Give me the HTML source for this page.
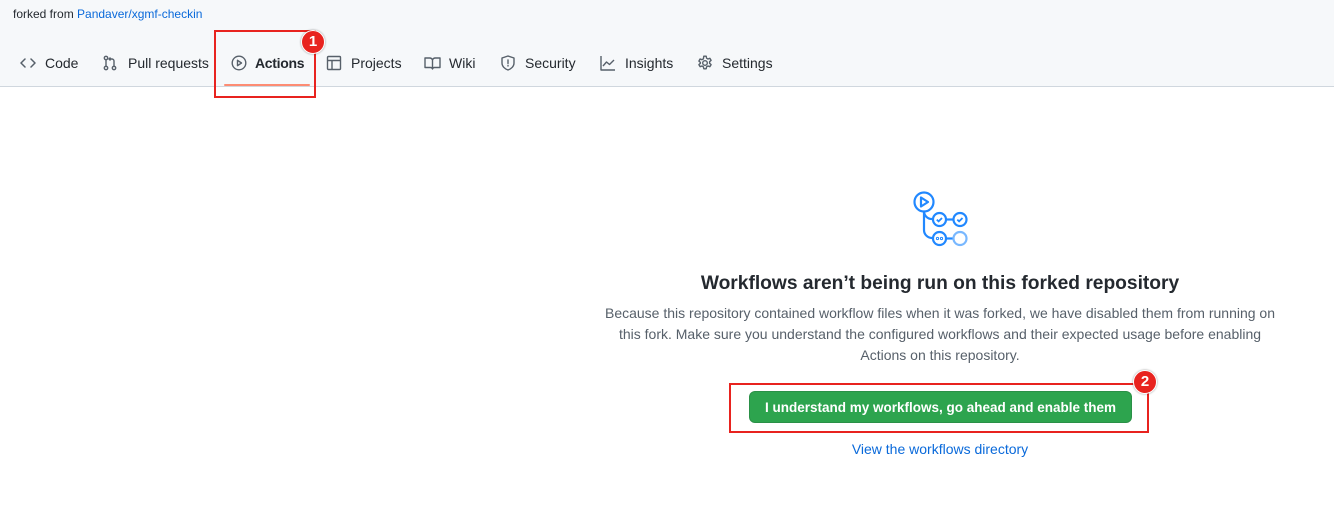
<!DOCTYPE html>
<html><head><meta charset="utf-8"><style>
*{margin:0;padding:0;box-sizing:border-box}
body{width:1334px;height:530px;background:#fff;font-family:"Liberation Sans",sans-serif;color:#24292f;position:relative;overflow:hidden}
.hdr{position:absolute;left:0;top:0;width:1334px;height:87px;background:#f6f8fa;border-bottom:1px solid #d0d7de}
.fork{position:absolute;left:13px;top:7px;font-size:12px;color:#24292f}
.fork a{color:#0969da;text-decoration:none}
.tab{position:absolute;top:54px;font-size:14px;height:18px;line-height:18px;white-space:nowrap}
.tab svg{position:absolute;left:0;top:1px}
.tab span{position:absolute;top:0}
.ul{position:absolute;left:224px;top:84px;width:86px;height:2px;background:#fd8c73;border-radius:2px}
.box{position:absolute;border:2px solid #e8231f}
.badge{position:absolute;width:24px;height:24px;border-radius:50%;background:#e8231f;color:#fff;font-weight:bold;font-size:15px;text-align:center;line-height:22px;border:1.5px solid #fff;box-shadow:0 0 2px rgba(0,0,0,.4)}
h2{position:absolute;left:600px;width:680px;top:273px;text-align:center;font-size:19.2px;font-weight:600}
p{position:absolute;left:600px;width:680px;top:303px;text-align:center;font-size:14px;line-height:21px;color:#57606a}
.btn{position:absolute;left:749px;top:391px;width:383px;height:32px;background:#2da44e;border-radius:6px;color:#fff;font-weight:bold;font-size:13.5px;text-align:center;line-height:32px;border:1px solid rgba(27,31,36,.15)}
.lnk{position:absolute;left:600px;width:680px;top:441px;text-align:center;font-size:14px;color:#0969da}
</style></head><body>
<div class="hdr">
<div class="fork">forked from <a>Pandaver/xgmf-checkin</a></div>
<div class="tab" style="left:20px"><svg width="16" height="16" viewBox="0 0 16 16" fill="none" stroke="#57606a" stroke-width="1.5" stroke-linecap="round" stroke-linejoin="round"><path d="M5 4 1 8l4 4M11 4l4 4-4 4"/></svg><span style="left:25px">Code</span></div>
<div class="tab" style="left:102px"><svg width="16" height="16" viewBox="0 0 16 16" fill="none" stroke="#57606a" stroke-width="1.4"><circle cx="4" cy="3" r="1.7"/><circle cx="4" cy="13" r="1.7"/><circle cx="12" cy="13" r="1.7"/><path d="M4 5v6M12 11V6a2 2 0 0 0-2-2H7M8.5 2.5 7 4l1.5 1.5"/></svg><span style="left:26px">Pull requests</span></div>
<div class="tab" style="left:231px"><svg width="16" height="16" viewBox="0 0 16 16" fill="none" stroke="#57606a" stroke-width="1.4"><circle cx="8" cy="8" r="6.8"/><path d="M6.5 5.3v5.4L10.5 8z" stroke-linejoin="round"/></svg><span style="left:24px;font-weight:bold;letter-spacing:-0.3px">Actions</span></div>
<div class="tab" style="left:326px"><svg width="16" height="16" viewBox="0 0 16 16" fill="none" stroke="#57606a" stroke-width="1.4"><rect x="1.5" y="1.5" width="13" height="13" rx="1"/><path d="M1.5 5.5h13M6 5.5v9"/></svg><span style="left:25px">Projects</span></div>
<div class="tab" style="left:424px"><svg width="17" height="16" viewBox="0 0 17 16" fill="none" stroke="#57606a" stroke-width="1.4" stroke-linejoin="round"><path d="M1 3h4.5A3 3 0 0 1 8.5 5v9a2 2 0 0 0-2-1.5H1zM16 3h-4.5A3 3 0 0 0 8.5 5v9a2 2 0 0 1 2-1.5H16z"/></svg><span style="left:25px">Wiki</span></div>
<div class="tab" style="left:500px"><svg width="16" height="16" viewBox="0 0 16 16" fill="none" stroke="#57606a" stroke-width="1.4" stroke-linejoin="round"><path d="M8 1 2 3v5c0 3.5 3 6 6 7 3-1 6-3.5 6-7V3z"/><path d="M8 5v3.5M8 10.5v.5" stroke-linecap="round"/></svg><span style="left:25px">Security</span></div>
<div class="tab" style="left:600px"><svg width="16" height="16" viewBox="0 0 16 16" fill="none" stroke="#57606a" stroke-width="1.4" stroke-linejoin="round"><path d="M1 1v14h14"/><path d="M3 11l3.5-4 3 2.5L14 5"/></svg><span style="left:25px">Insights</span></div>
<div class="tab" style="left:697px"><svg width="16" height="16" viewBox="0 0 16 16" fill="none" stroke="#57606a" stroke-width="1.4"><circle cx="8" cy="8" r="2.3"/><path d="M6.8 1.2h2.4l.4 2 1.4.8 1.9-.7 1.2 2.1-1.5 1.3v1.6l1.5 1.3-1.2 2.1-1.9-.7-1.4.8-.4 2H6.8l-.4-2-1.4-.8-1.9.7-1.2-2.1 1.5-1.3V7.4L1.9 6.1l1.2-2.1 1.9.7 1.4-.8z" stroke-linejoin="round"/></svg><span style="left:25px">Settings</span></div>
<div class="ul"></div>
</div>
<div class="box" style="left:214px;top:30px;width:102px;height:68px"></div>
<div class="badge" style="left:301px;top:30px">1</div>
<svg style="position:absolute;left:910px;top:190px" width="62" height="58" viewBox="0 0 62 58" fill="none" stroke-width="2.2">
<g stroke="#2188ff"><circle cx="14" cy="12" r="9.5"/><path d="M11 7.5v9l7-4.5z" stroke-linejoin="round"/><path d="M14 22v18a8 8 0 0 0 8 8h1.5M14 22v0a8 8 0 0 0 8 7h1.5"/><circle cx="29.5" cy="29.5" r="6.5"/><circle cx="50" cy="29.5" r="6.5"/><path d="M36 29.5h7.5"/><path d="M26.8 29.6l1.8 1.8 3.4-3.4M47.3 29.6l1.8 1.8 3.4-3.4" stroke-width="1.8"/><circle cx="29.5" cy="48.5" r="6.5"/><path d="M36 48.5h7.5"/></g>
<circle cx="27.5" cy="48.5" r=".5" stroke="#2188ff"/><circle cx="31.5" cy="48.5" r=".5" stroke="#2188ff"/>
<circle cx="50" cy="48.5" r="6.5" stroke="#79b8ff"/>
</svg>
<h2>Workflows aren’t being run on this forked repository</h2>
<p>Because this repository contained workflow files when it was forked, we have disabled them from running on this fork. Make sure you understand the configured workflows and their expected usage before enabling Actions on this repository.</p>
<div class="box" style="left:729px;top:383px;width:420px;height:50px"></div>
<div class="btn">I understand my workflows, go ahead and enable them</div>
<div class="badge" style="left:1133px;top:370px">2</div>
<div class="lnk">View the workflows directory</div>
</body></html>
